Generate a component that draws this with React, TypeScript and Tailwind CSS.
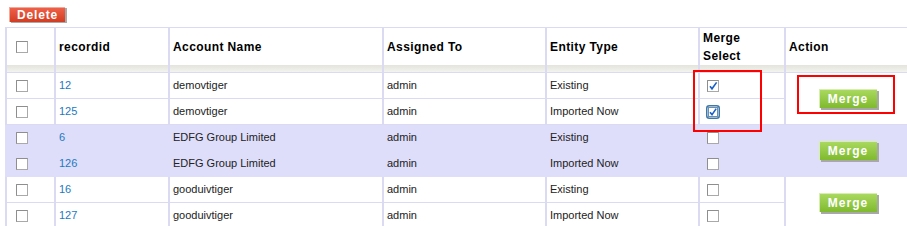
import React from 'react'

type Row = { id: string; name: string; owner: string; type: string; checked?: boolean; focused?: boolean }

const groups: { rows: Row[]; shaded?: boolean }[] = [
  {
    rows: [
      { id: '12', name: 'demovtiger', owner: 'admin', type: 'Existing', checked: true },
      { id: '125', name: 'demovtiger', owner: 'admin', type: 'Imported Now', checked: true, focused: true },
    ],
  },
  {
    shaded: true,
    rows: [
      { id: '6', name: 'EDFG Group Limited', owner: 'admin', type: 'Existing' },
      { id: '126', name: 'EDFG Group Limited', owner: 'admin', type: 'Imported Now' },
    ],
  },
  {
    rows: [
      { id: '16', name: 'gooduivtiger', owner: 'admin', type: 'Existing' },
      { id: '127', name: 'gooduivtiger', owner: 'admin', type: 'Imported Now' },
    ],
  },
]

function Box({ checked, focused }: { checked?: boolean; focused?: boolean }) {
  if (focused) {
    return (
      <svg width="14" height="14" viewBox="0 0 14 14" className="block">
        <rect x="0.75" y="0.75" width="12.5" height="12.5" rx="2.5" fill="#fff" stroke="#3d78a8" strokeWidth="1.5" />
        <rect x="2.5" y="2.5" width="9" height="9" fill="#fff" stroke="#6c8fb0" strokeWidth="1" />
        <path d="M4 7.2 L6 9.6 L10.2 3.6" fill="none" stroke="#1860c8" strokeWidth="1.6" />
      </svg>
    )
  }
  return (
    <svg width="12" height="12" viewBox="0 0 12 12" className="block">
      <rect x="0.5" y="0.5" width="11" height="11" fill="#fff" stroke="#a9a9a9" />
      <path d="M0.5 11.5 V0.5 H11.5" fill="none" stroke="#8e8e8e" />
      {checked && <path d="M3 6.2 L5 8.8 L9.6 2.4" fill="none" stroke="#1860c8" strokeWidth="1.6" />}
    </svg>
  )
}

function MergeButton() {
  return (
    <button className="inline-block h-[19px] w-[58px] border-t border-l border-t-[#d6eeb0] border-l-[#d6eeb0] bg-[linear-gradient(to_bottom,#a9d85e,#7fba2e)] text-[12px] font-bold leading-[17px] tracking-[1px] text-white shadow-[2px_2px_0_#a8a8a8]">
      Merge
    </button>
  )
}

const th = 'border-l-2 border-b border-[#dadaf2] bg-[linear-gradient(to_bottom,#fff_0,#fff_37px,#e4e4dc_37px,#f3f3ef_44px)] h-[45px] p-0 pb-[7px] text-left align-middle text-[12px] font-bold tracking-[0.4px] text-black'

export default function App() {
  return (
    <div className="relative h-[226px] w-[907px] overflow-hidden bg-white font-['Liberation_Sans',Arial,sans-serif]">
      <div className="h-[27px] pl-[9px] pt-[7px]">
        <button className="block h-[15px] w-[56px] border-t border-l border-t-[#f4a898] border-l-[#f4a898] bg-[linear-gradient(to_bottom,#ee6048,#d23c22)] text-[12px] font-bold leading-[14px] tracking-[0.8px] text-white shadow-[2px_1px_0_#a9a9a9]">
          Delete
        </button>
      </div>

      <table className="ml-[5px] w-[910px] table-fixed border-separate border-spacing-0 border-t border-[#dadaf2]">
        <colgroup>
          <col className="w-[49px]" />
          <col className="w-[114px]" />
          <col className="w-[214px]" />
          <col className="w-[163px]" />
          <col className="w-[153px]" />
          <col className="w-[86px]" />
          <col className="w-[131px]" />
        </colgroup>
        <thead>
          <tr>
            <th className={th + ' pl-[9px]'}>
              <Box />
            </th>
            <th className={th + ' pl-[3px]'}>recordid</th>
            <th className={th + ' pl-[3px]'}>Account Name</th>
            <th className={th + ' pl-[3px]'}>Assigned To</th>
            <th className={th + ' pl-[3px]'}>Entity Type</th>
            <th className={th + ' pl-[3px] leading-[18px]'}>
              Merge
              <br />
              Select
            </th>
            <th className={th + ' pl-[3px]'}>Action</th>
          </tr>
        </thead>
        <tbody className="text-[11px] text-[#222]">
          {groups.map((g, gi) =>
            g.rows.map((r, ri) => {
              const bg = g.shaded ? 'bg-[#dedefa]' : 'bg-white'
              const line = g.shaded ? 'border-b border-[#dedefa]' : 'border-b border-[#dadaf2]'
              const vline = g.shaded ? 'border-l-2 border-l-[#dedefa]' : 'border-l-2 border-l-[#dadaf2]'
              const td = `${bg} ${line} ${vline} h-[26px] p-0 pl-[3px] align-middle`
              return (
                <tr key={gi + '-' + ri}>
                  <td className={td + ' pl-[9px]'}>
                    <Box />
                  </td>
                  <td className={td}>
                    <a className="text-[#2379c0]">{r.id}</a>
                  </td>
                  <td className={td}>{r.name}</td>
                  <td className={td}>{r.owner}</td>
                  <td className={td}>{r.type}</td>
                  <td className={td + (r.focused ? ' pl-[6px]' : ' pl-[7px]')}>
                    <Box checked={r.checked} focused={r.focused} />
                  </td>
                  {ri === 0 && (
                    <td rowSpan={2} className={`${bg} ${vline} border-b ${g.shaded ? 'border-b-[#dedefa]' : 'border-b-[#dadaf2]'} p-0 pr-[6px] text-center align-middle`}>
                      <MergeButton />
                    </td>
                  )}
                </tr>
              )
            })
          )}
        </tbody>
      </table>

      <div className="absolute left-[693px] top-[70px] h-[62px] w-[69px] border-2 border-[#ff0000]" />
      <div className="absolute left-[797px] top-[75px] h-[39px] w-[98px] border-2 border-[#ff0000]" />
    </div>
  )
}
